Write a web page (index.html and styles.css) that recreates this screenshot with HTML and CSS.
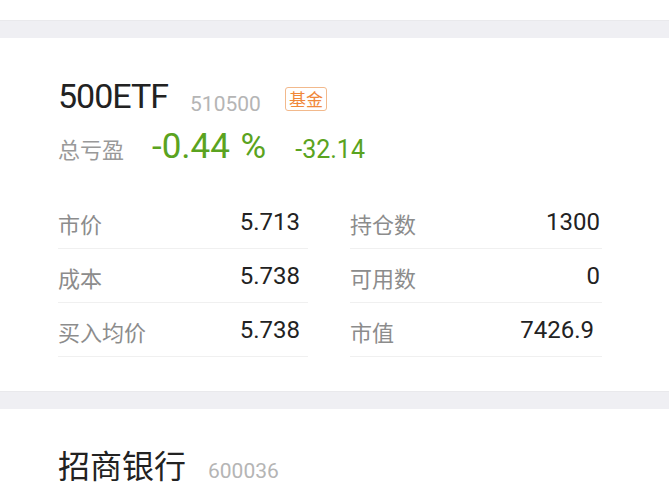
FILE: index.html
```html
<!DOCTYPE html>
<html lang="zh-CN">
<head>
    <meta charset="UTF-8">
    <meta name="viewport" content="width=device-width, initial-scale=1.0">
    <title>持仓</title>
    <link rel="stylesheet" href="styles.css">
</head>
<body>

<div class="gap"></div>

<div class="card">
    <div class="head">
        <span class="name">500ETF</span>
        <span class="code">510500</span>
        <span class="tag">基金</span>
    </div>
    <div class="summary">
        <span class="summary-label">总亏盈</span>
        <span class="pct down">-0.44 %</span>
        <span class="amount down">-32.14</span>
    </div>

    <div class="grid">
        <div class="col col-left">
            <div class="row"><span class="label">市价</span><span class="value">5.713</span></div>
            <div class="row"><span class="label">成本</span><span class="value">5.738</span></div>
            <div class="row"><span class="label">买入均价</span><span class="value">5.738</span></div>
        </div>
        <div class="col col-right">
            <div class="row"><span class="label">持仓数</span><span class="value">1300</span></div>
            <div class="row"><span class="label">可用数</span><span class="value">0</span></div>
            <div class="row"><span class="label">市值</span><span class="value value-last">7426.9</span></div>
        </div>
    </div>
</div>

<div class="gap"></div>

<!-- second holding, cut off by the window -->
<div class="card card-cn">
    <div class="head">
        <span class="name name-cn">招商银行</span>
        <span class="code">600036</span>
    </div>
    <div class="summary">
        <span class="summary-label">总亏盈</span>
        <span class="pct up">+0.86 %</span>
        <span class="amount up">86.00</span>
    </div>
</div>

</body>
</html>
```

FILE: styles.css
```css
body, html {
    margin: 0;
    padding: 0;
    background-color: #fff;
    font-family: Roboto, "Noto Sans CJK SC", sans-serif;
    overflow: hidden;
}

body {
    padding-top: 20px;
}

.gap {
    height: 18px;
    background-color: #efeff3;
    border-top: 1px solid #e9e9ec;
    box-sizing: border-box;
}

.card {
    padding: 38px 0 34px 58px;
    background-color: #fff;
}

.card-cn {
    padding-top: 32px;
}

.head {
    display: flex;
    align-items: baseline;
    height: 46px;
}

.name {
    font-size: 34px;
    color: #222;
    letter-spacing: -1px;
}

.name-cn {
    font-family: "Noto Sans CJK SC", sans-serif;
    font-size: 32px;
    letter-spacing: 0;
}

.code {
    margin-left: 22px;
    font-size: 21px;
    color: #b5b5b5;
    position: relative;
    top: 3px;
}

.card-cn .code {
    top: 0;
}

.tag {
    margin-left: 24px;
    padding: 0 3px;
    font-family: "Noto Sans CJK SC", sans-serif;
    font-size: 17px;
    line-height: 22px;
    color: #f0883a;
    border: 1px solid #f2b98c;
    border-radius: 3px;
    align-self: center;
}

.summary {
    display: flex;
    align-items: baseline;
    margin-top: 4px;
}

.card-cn .summary {
    margin-top: 6px;
}

.summary-label {
    font-family: "Noto Sans CJK SC", sans-serif;
    font-size: 22px;
    color: #999;
}

.pct {
    margin-left: 28px;
    font-size: 35px;
    word-spacing: 2px;
}

.amount {
    margin-left: 29px;
    font-size: 25px;
}

.down {
    color: #5aa320;
}

.up {
    color: #f0693c;
}

.grid {
    display: grid;
    grid-template-columns: 250px 252px;
    column-gap: 42px;
    margin-top: 28px;
}

.row {
    display: flex;
    justify-content: space-between;
    align-items: center;
    height: 54px;
    border-bottom: 1px solid #f0f0f0;
    box-sizing: border-box;
}

.label {
    font-family: "Noto Sans CJK SC", sans-serif;
    font-size: 22px;
    color: #8c8c8c;
    position: relative;
    top: 1px;
}

.value {
    font-size: 24px;
    color: #222;
}

.col-left .value {
    padding-right: 8px;
}

.col-right .value {
    padding-right: 2px;
}

.col-right .value-last {
    padding-right: 8px;
}
```
